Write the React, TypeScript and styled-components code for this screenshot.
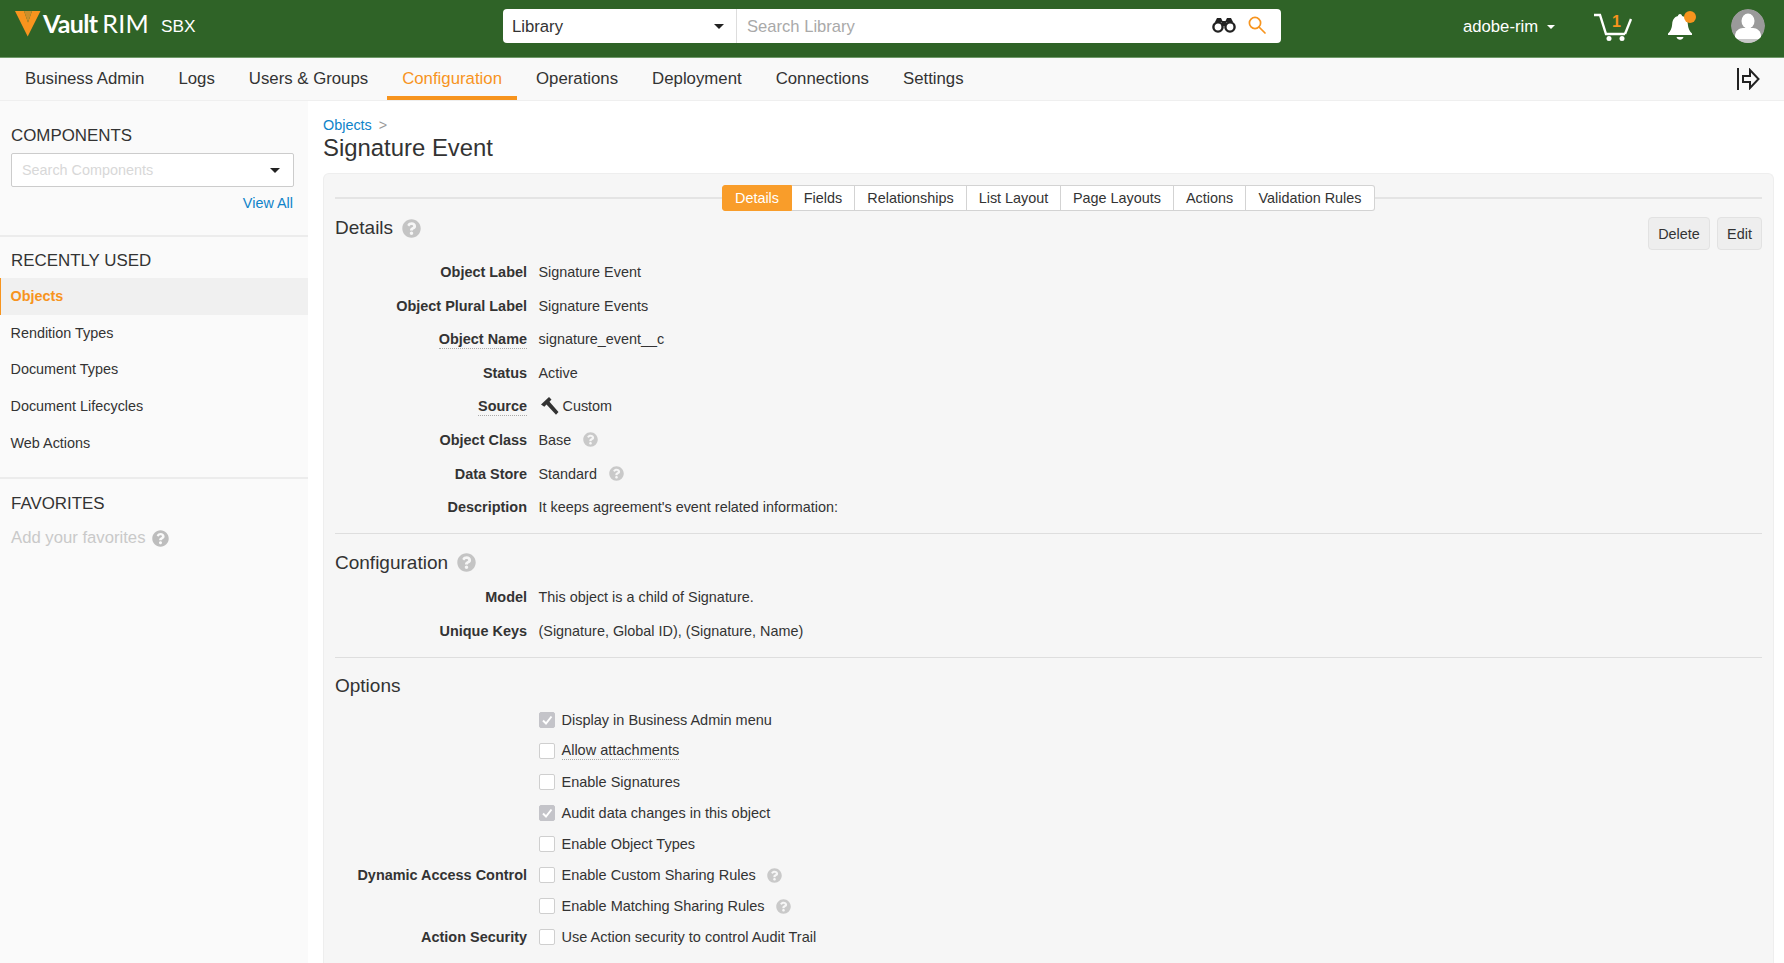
import React from "react";
import styled, { createGlobalStyle } from "styled-components";
import { FaQuestionCircle } from "react-icons/fa";

const Global = createGlobalStyle`
  html, body { margin: 0; padding: 0; height: 100%; overflow: hidden; background: #fff; }
  body { font-family: "Liberation Sans", Arial, sans-serif; color: #333; }
  #root { height: 100%; }
  * { box-sizing: border-box; }
`;

const Page = styled.div`
  height: 963px;
  display: flex;
  flex-direction: column;
  overflow: hidden;
`;

const Header = styled.header`
  height: 58px;
  flex: none;
  background: #2f6327;
  border-bottom: 1px solid #6f9a69;
  display: flex;
  align-items: flex-start;
  color: #fff;
`;
const Brand = styled.div`
  width: 503px;
  flex: none;
  height: 57px;
  display: flex;
  align-items: flex-start;
  padding: 11px 0 0 15px;
`;
const LogoName = styled.span`
  font-family: Lato, "Liberation Sans", sans-serif;
  font-size: 25px;
  line-height: 25px;
  font-weight: 700;
  margin-left: 2px;
  letter-spacing: -0.7px;
`;
const LogoLight = styled.span`
  font-weight: 400;
  margin-left: 5px;
  letter-spacing: 0.3px;
`;
const Env = styled.span`
  font-size: 17.3px;
  line-height: 20px;
  margin-left: 12px;
  margin-top: 5px;
`;
const SearchBar = styled.div`
  width: 778px;
  height: 34px;
  margin-top: 9px;
  flex: none;
  background: #fff;
  border-radius: 4px;
  display: flex;
  align-items: center;
`;
const ScopeSelect = styled.div`
  width: 234px;
  height: 100%;
  border-right: 1px solid #ddd;
  display: flex;
  align-items: center;
  justify-content: space-between;
  padding: 1px 12px 0 9px;
  color: #333;
  font-size: 16.7px;
`;
const Caret = styled.span<{ $c?: string; $s?: number }>`
  width: 0;
  height: 0;
  flex: none;
  border-left: ${(p) => p.$s ?? 5}px solid transparent;
  border-right: ${(p) => p.$s ?? 5}px solid transparent;
  border-top: ${(p) => p.$s ?? 5}px solid ${(p) => p.$c ?? "#222"};
`;
const SearchText = styled.div`
  flex: 1;
  padding: 1px 0 0 10px;
  color: #a9a9a9;
  font-size: 16.6px;
`;
const SearchIcons = styled.div`
  display: flex;
  align-items: center;
  gap: 12px;
  padding-right: 15px;
  margin-top: -2px;
`;
const UserArea = styled.div`
  flex: 1;
  display: flex;
  align-items: flex-start;
  padding-left: 182px;
`;
const UserName = styled.div`
  width: 131px;
  height: 57px;
  flex: none;
  display: flex;
  align-items: center;
  gap: 9px;
  font-size: 16.7px;
  padding-bottom: 4px;
`;
const CartBox = styled.div`
  position: relative;
  width: 38px;
  height: 28px;
  margin-top: 13px;
  flex: none;
`;
const CartCount = styled.span`
  position: absolute;
  left: 18px;
  top: 1px;
  color: #f7941e;
  font-size: 16px;
  line-height: 16px;
  font-weight: 700;
`;
const BellBox = styled.div`
  position: relative;
  width: 26px;
  height: 27px;
  margin: 13px 0 0 35px;
  flex: none;
`;
const BellDot = styled.span`
  position: absolute;
  right: -3px;
  top: -2px;
  width: 12px;
  height: 12px;
  border-radius: 50%;
  background: #f7941e;
`;
const Avatar = styled.div`
  width: 34px;
  height: 34px;
  margin: 9px 0 0 38px;
  flex: none;
  border-radius: 50%;
  overflow: hidden;
`;

const Nav = styled.nav`
  height: 43px;
  flex: none;
  display: flex;
  align-items: stretch;
  gap: 4px;
  padding: 0 24px 0 10px;
  background: #f9f9f9;
  border-bottom: 1px solid #efefef;
`;
const NavItem = styled.a<{ $active?: boolean }>`
  display: flex;
  align-items: center;
  padding: 4px 15px 0;
  font-size: 16.8px;
  color: ${(p) => (p.$active ? "#f7941e" : "#333")};
  border-bottom: 4px solid ${(p) => (p.$active ? "#f7941e" : "transparent")};
`;
const NavSpacer = styled.div`
  flex: 1;
`;
const NavIcon = styled.div`
  display: flex;
  align-items: center;
`;

const Body = styled.div`
  flex: 1;
  min-height: 0;
  display: flex;
`;
const Sidebar = styled.aside`
  width: 308px;
  flex: none;
  background: #fafafa;
`;
const SideSection = styled.section<{ $h: number; $pt: number }>`
  height: ${(p) => p.$h}px;
  padding-top: ${(p) => p.$pt}px;
  border-bottom: 2px solid #ececec;
  &:last-child { border-bottom: 0; }
`;
const SideTitle = styled.h3`
  margin: 0;
  padding-left: 11px;
  font-size: 16.9px;
  line-height: 20px;
  font-weight: 400;
  color: #333;
`;
const SideSelect = styled.div`
  margin: 7px 14px 0 11px;
  height: 34px;
  background: #fff;
  border: 1px solid #ccc;
  border-radius: 2px;
  display: flex;
  align-items: center;
  justify-content: space-between;
  padding: 0 13px 0 10px;
  color: #d8d8d8;
  font-size: 14.4px;
`;
const ViewAll = styled.a`
  display: block;
  text-align: right;
  padding-right: 15px;
  margin-top: 7px;
  color: #0f83c9;
  font-size: 14.4px;
  line-height: 18px;
`;
const SideList = styled.div`
  margin-top: 7px;
`;
const SideItem = styled.a<{ $active?: boolean }>`
  display: flex;
  align-items: center;
  height: 36.6px;
  padding-left: 9.5px;
  font-size: 14.4px;
  color: ${(p) => (p.$active ? "#f7941e" : "#333")};
  font-weight: ${(p) => (p.$active ? 700 : 400)};
  background: ${(p) => (p.$active ? "#f0f0f0" : "transparent")};
  border-left: 1px solid ${(p) => (p.$active ? "#f7941e" : "transparent")};
`;
const FavHint = styled.div`
  display: flex;
  align-items: center;
  gap: 6px;
  padding-left: 11px;
  margin-top: 14px;
  color: #c9c9c9;
  font-size: 16.7px;
  line-height: 20px;
`;

const Main = styled.main`
  flex: 1;
  min-width: 0;
  padding: 15px 10px 0 15px;
  display: flex;
  flex-direction: column;
`;
const Crumb = styled.div`
  display: flex;
  align-items: center;
  gap: 7px;
  font-size: 14.4px;
  line-height: 18px;
  color: #0f83c9;
`;
const CrumbSep = styled.span`
  color: #999;
`;
const Title = styled.h1`
  margin: 0;
  font-size: 23.9px;
  line-height: 28px;
  font-weight: 400;
  color: #333;
`;
const Panel = styled.div`
  flex: 1;
  margin-top: 11px;
  padding: 11px 11px 0;
  background: #f6f6f6;
  border: 1px solid #eee;
  border-bottom: 0;
  border-radius: 6px 6px 0 0;
`;
const TabBar = styled.div`
  display: flex;
  align-items: center;
`;
const TabRule = styled.div`
  flex: 1;
  height: 2px;
  background: #e4e4e4;
`;
const Tabs = styled.div`
  display: flex;
  height: 26px;
  flex: none;
`;
const Tab = styled.div<{ $active?: boolean; $w: number }>`
  width: ${(p) => p.$w}px;
  display: flex;
  align-items: center;
  justify-content: center;
  font-size: 14.4px;
  background: ${(p) => (p.$active ? "#f99d2a" : "#fff")};
  color: ${(p) => (p.$active ? "#fff" : "#333")};
  border: 1px solid ${(p) => (p.$active ? "#f99d2a" : "#d3d3d3")};
  border-left-width: ${(p) => (p.$active ? 1 : 0)}px;
  &:first-child { border-radius: 3px 0 0 3px; }
  &:last-child { border-radius: 0 3px 3px 0; }
`;
const SectionHead = styled.div`
  display: flex;
  align-items: flex-start;
  justify-content: space-between;
  margin-top: 6px;
`;
const SectionTitle = styled.h2<{ $mt?: number }>`
  margin: ${(p) => p.$mt ?? 0}px 0 0;
  display: flex;
  align-items: center;
  gap: 9px;
  font-size: 19px;
  line-height: 22px;
  font-weight: 400;
  color: #333;
  svg { color: #c4c4c4; width: 19px; height: 19px; }
`;
const Actions = styled.div`
  display: flex;
  gap: 7px;
`;
const Button = styled.button<{ $w: number }>`
  width: ${(p) => p.$w}px;
  height: 33px;
  padding: 0;
  background: #eee;
  border: 1px solid #e2e2e2;
  border-radius: 4px;
  font-family: inherit;
  font-size: 14.4px;
  color: #333;
`;
const Rows = styled.div<{ $mt: number }>`
  margin-top: ${(p) => p.$mt}px;
`;
const Row = styled.div<{ $h?: number; $fs?: number }>`
  display: grid;
  grid-template-columns: 192px 1fr;
  column-gap: 11.5px;
  align-items: center;
  height: ${(p) => p.$h ?? 33.6}px;
  font-size: ${(p) => p.$fs ?? 14.4}px;
`;
const Label = styled.div`
  text-align: right;
  font-weight: 700;
  font-size: 14.45px;
  color: #333;
`;
const Dotted = styled.span`
  border-bottom: 1px dotted #aaa;
  padding-bottom: 1px;
`;
const Value = styled.div`
  display: flex;
  align-items: center;
  color: #333;
`;
const SourceIcon = styled.span`
  display: inline-flex;
  margin: 0 4px 0 2px;
`;
const ValueHelp = styled.span<{ $ml: number }>`
  display: inline-flex;
  margin-left: ${(p) => p.$ml}px;
  svg { color: #c9c9c9; width: 15px; height: 15px; }
`;
const Divider = styled.hr`
  margin: 9px 0 0;
  height: 1px;
  border: 0;
  background: #dedede;
`;
const CheckBox = styled.span<{ $on?: boolean }>`
  width: 16px;
  height: 16px;
  flex: none;
  margin-right: 7px;
  display: inline-flex;
  align-items: center;
  justify-content: center;
  border-radius: 2px;
  background: ${(p) => (p.$on ? "#c4c4c9" : "#fff")};
  border: 1.5px solid ${(p) => (p.$on ? "#c4c4c9" : "#cfcfcf")};
`;

const Help = () => <FaQuestionCircle />;

const Logo = () => (
  <svg width="26" height="26" viewBox="0 0 26 26">
    <path d="M0 0h9l4 11.500L17 0h8.500L12.700 25.500z" fill="#f7941e" />
    <path d="M9 0h8l-4 11.500z" fill="#c98f2b" />
  </svg>
);
const Binoculars = () => (
  <svg width="24" height="16" viewBox="0 0 24 16">
    <path d="M3 5l2-4h4l1.500 3h3L15 1h4l2 4z" fill="#222" />
    <rect x="9.500" y="4" width="5" height="5" fill="#222" />
    <circle cx="6" cy="10" r="4.600" fill="#fff" stroke="#222" strokeWidth="2.400" />
    <circle cx="18" cy="10" r="4.600" fill="#fff" stroke="#222" strokeWidth="2.400" />
  </svg>
);
const SearchGlyph = () => (
  <svg width="18" height="18" viewBox="0 0 18 18" fill="none" stroke="#f7941e" strokeWidth="1.700">
    <circle cx="7" cy="7" r="5.600" />
    <path d="M11 11l6 6" strokeLinecap="round" />
  </svg>
);
const Cart = () => (
  <svg width="38" height="28" viewBox="0 0 38 28" fill="none" stroke="#fff" strokeWidth="2.400">
    <path d="M0 2h6l6 19h19" />
    <path d="M37 6l-6 15" />
    <circle cx="15" cy="25.500" r="2.500" fill="#fff" stroke="none" />
    <circle cx="28" cy="25.500" r="2.500" fill="#fff" stroke="none" />
  </svg>
);
const Bell = () => (
  <svg width="26" height="27" viewBox="0 0 26 27" fill="#fff">
    <path d="M13 1c1.300 0 2 1 2 2 4 1 5.500 4 5.800 8 .3 4 1.700 7.500 4.200 9.500v1.500H1v-1.500C3.500 18.500 4.900 15 5.200 11 5.500 7 7 4 11 3c0-1 .7-2 2-2z" />
    <path d="M9.500 24h7c-.5 1.800-1.800 2.800-3.500 2.800S10 25.800 9.500 24z" />
  </svg>
);
const UserAvatar = () => (
  <svg width="34" height="34" viewBox="0 0 34 34">
    <circle cx="17" cy="17" r="17" fill="#9a9a9a" />
    <ellipse cx="17" cy="12" rx="6.500" ry="7.500" fill="#fff" />
    <path d="M4 30v-3c0-5 4-8 8-8h10c4 0 8 3 8 8v3z" fill="#fff" />
    <rect x="0" y="30" width="34" height="4" fill="#c8c8c8" />
  </svg>
);
const Collapse = () => (
  <svg width="23" height="22" viewBox="0 0 23 22" fill="none" stroke="#222" strokeWidth="2">
    <path d="M1 0v22" />
    <path d="M6 8h7V2l8.500 9L13 20v-6H6z" />
  </svg>
);
const Hammer = () => (
  <svg width="18" height="18" viewBox="0 0 18 18" fill="#333">
    <path d="M0 7.500L8 0l2.500 2.500-2 2.300L17.500 15 15 17.800 5.500 7.500 3.300 9.700z" />
  </svg>
);
const Tick = () => (
  <svg width="12" height="12" viewBox="0 0 12 12" fill="none" stroke="#fff" strokeWidth="2">
    <path d="M2 6.500l3 3L10.500 2.500" />
  </svg>
);

const navItems = ["Business Admin", "Logs", "Users & Groups", "Configuration", "Operations", "Deployment", "Connections", "Settings"];
const tabs: [string, number][] = [
  ["Details", 70], ["Fields", 63], ["Relationships", 112], ["List Layout", 94],
  ["Page Layouts", 113], ["Actions", 72], ["Validation Rules", 129],
];
const recent = ["Objects", "Rendition Types", "Document Types", "Document Lifecycles", "Web Actions"];
const options: { label?: string; text: string; on?: boolean; dotted?: boolean; help?: boolean }[] = [
  { text: "Display in Business Admin menu", on: true },
  { text: "Allow attachments", dotted: true },
  { text: "Enable Signatures" },
  { text: "Audit data changes in this object", on: true },
  { text: "Enable Object Types" },
  { label: "Dynamic Access Control", text: "Enable Custom Sharing Rules", help: true },
  { text: "Enable Matching Sharing Rules", help: true },
  { label: "Action Security", text: "Use Action security to control Audit Trail" },
];

export default function App() {
  return (
    <Page>
      <Global />
      <Header>
        <Brand>
          <Logo />
          <LogoName>Vault<LogoLight>RIM</LogoLight></LogoName>
          <Env>SBX</Env>
        </Brand>
        <SearchBar>
          <ScopeSelect>Library<Caret /></ScopeSelect>
          <SearchText>Search Library</SearchText>
          <SearchIcons><Binoculars /><SearchGlyph /></SearchIcons>
        </SearchBar>
        <UserArea>
          <UserName>adobe-rim<Caret $c="#fff" $s={4} /></UserName>
          <CartBox><Cart /><CartCount>1</CartCount></CartBox>
          <BellBox><Bell /><BellDot /></BellBox>
          <Avatar><UserAvatar /></Avatar>
        </UserArea>
      </Header>
      <Nav>
        {navItems.map((n) => (
          <NavItem key={n} $active={n === "Configuration"}>{n}</NavItem>
        ))}
        <NavSpacer />
        <NavIcon><Collapse /></NavIcon>
      </Nav>
      <Body>
        <Sidebar>
          <SideSection $h={136} $pt={25}>
            <SideTitle>COMPONENTS</SideTitle>
            <SideSelect>Search Components<Caret /></SideSelect>
            <ViewAll>View All</ViewAll>
          </SideSection>
          <SideSection $h={242} $pt={14}>
            <SideTitle>RECENTLY USED</SideTitle>
            <SideList>
              {recent.map((r) => (
                <SideItem key={r} $active={r === "Objects"}>{r}</SideItem>
              ))}
            </SideList>
          </SideSection>
          <SideSection $h={200} $pt={15}>
            <SideTitle>FAVORITES</SideTitle>
            <FavHint>Add your favorites <FaQuestionCircle size={17} color="#bdbdbd" /></FavHint>
          </SideSection>
        </Sidebar>
        <Main>
          <Crumb>Objects <CrumbSep>&gt;</CrumbSep></Crumb>
          <Title>Signature Event</Title>
          <Panel>
            <TabBar>
              <TabRule />
              <Tabs>
                {tabs.map(([t, w], i) => (
                  <Tab key={t} $w={w} $active={i === 0}>{t}</Tab>
                ))}
              </Tabs>
              <TabRule />
            </TabBar>
            <SectionHead>
              <SectionTitle>Details <Help /></SectionTitle>
              <Actions>
                <Button $w={62}>Delete</Button>
                <Button $w={45}>Edit</Button>
              </Actions>
            </SectionHead>
            <Rows $mt={5.2}>
              <Row><Label>Object Label</Label><Value>Signature Event</Value></Row>
              <Row><Label>Object Plural Label</Label><Value>Signature Events</Value></Row>
              <Row><Label><Dotted>Object Name</Dotted></Label><Value>signature_event__c</Value></Row>
              <Row><Label>Status</Label><Value>Active</Value></Row>
              <Row><Label><Dotted>Source</Dotted></Label><Value><SourceIcon><Hammer /></SourceIcon>Custom</Value></Row>
              <Row><Label>Object Class</Label><Value>Base<ValueHelp $ml={12}><Help /></ValueHelp></Value></Row>
              <Row><Label>Data Store</Label><Value>Standard<ValueHelp $ml={12}><Help /></ValueHelp></Value></Row>
              <Row><Label>Description</Label><Value>It keeps agreement's event related information:</Value></Row>
            </Rows>
            <Divider />
            <SectionTitle $mt={18}>Configuration <Help /></SectionTitle>
            <Rows $mt={6.7}>
              <Row><Label>Model</Label><Value>This object is a child of Signature.</Value></Row>
              <Row><Label>Unique Keys</Label><Value>(Signature, Global ID), (Signature, Name)</Value></Row>
            </Rows>
            <Divider />
            <SectionTitle $mt={17}>Options</SectionTitle>
            <Rows $mt={8}>
              {options.map((o) => (
                <Row key={o.text} $h={31} $fs={14.5}>
                  <Label>{o.label}</Label>
                  <Value>
                    <CheckBox $on={o.on}>{o.on && <Tick />}</CheckBox>
                    {o.dotted ? <Dotted>{o.text}</Dotted> : o.text}
                    {o.help && <ValueHelp $ml={11}><Help /></ValueHelp>}
                  </Value>
                </Row>
              ))}
            </Rows>
          </Panel>
        </Main>
      </Body>
    </Page>
  );
}
